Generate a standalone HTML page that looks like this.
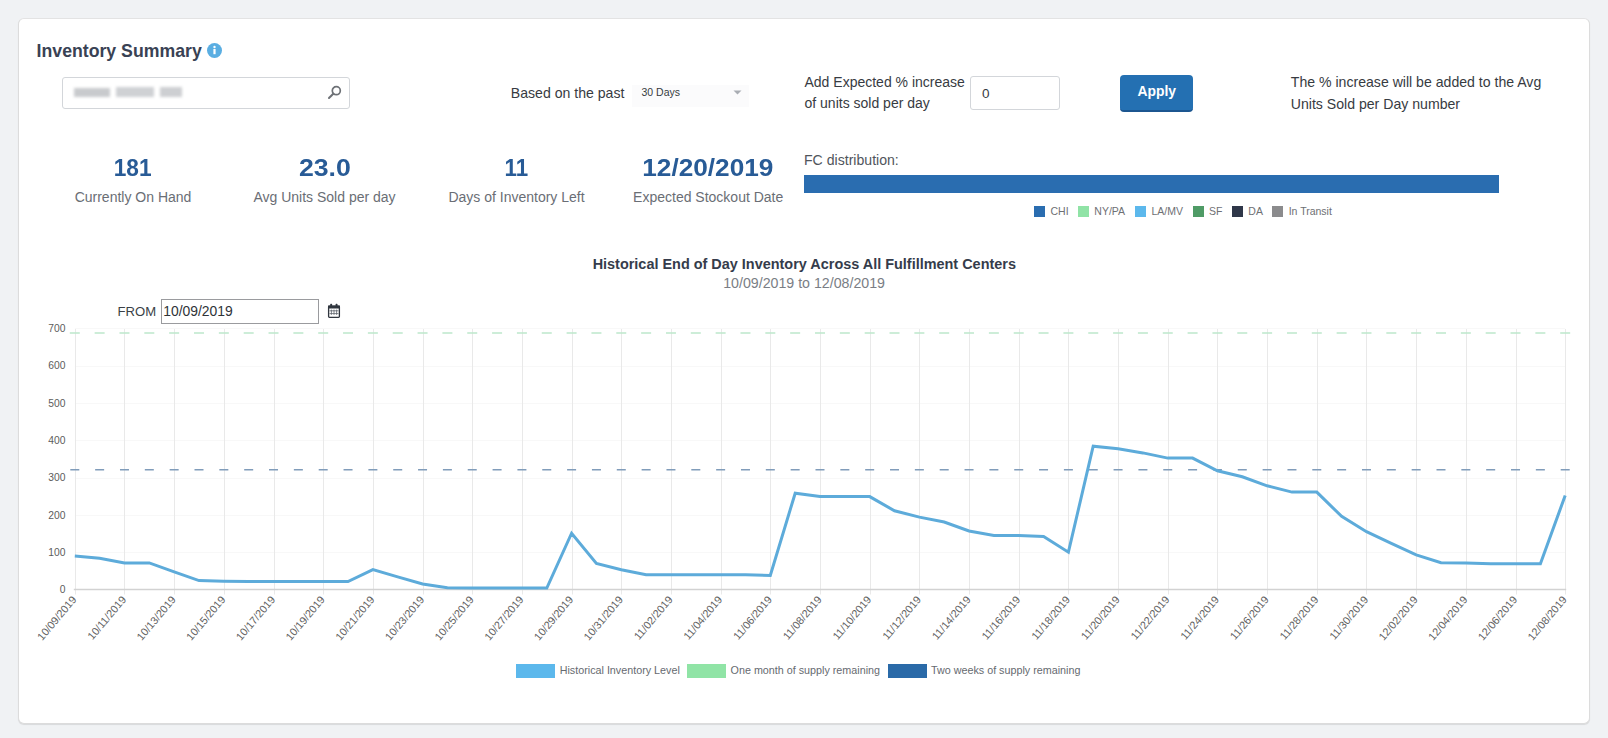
<!DOCTYPE html><html><head><meta charset="utf-8"><style>
html,body{margin:0;padding:0;}
body{width:1608px;height:738px;background:#f0f2f4;position:relative;overflow:hidden;font-family:"Liberation Sans",sans-serif;}
.t{position:absolute;line-height:1;white-space:nowrap;}
.b{position:absolute;box-sizing:border-box;}
</style></head><body>
<div class="b" style="left:18px;top:18px;width:1572px;height:706px;background:#fff;border:1px solid #dcdcdc;border-top-color:#e3e3e3;border-radius:6px;box-shadow:0 1px 1px rgba(0,0,0,0.10);"></div>
<div class="t" style="top:42.62px;font-size:17.7px;font-weight:700;color:#394254;left:36.60px;">Inventory Summary</div>
<svg class="b" style="left:206px;top:42px;" width="17" height="17" viewBox="0 0 17 17"><circle cx="8.5" cy="8.5" r="7.5" fill="#5aaee2"/><rect x="7.4" y="7" width="2.2" height="5.2" fill="#fff"/><circle cx="8.5" cy="5" r="1.2" fill="#fff"/></svg>
<div class="b" style="left:62px;top:77px;width:288px;height:32px;border:1px solid #d3d6da;border-radius:3px;background:#fff;"></div>
<div class="b" style="left:74px;top:88px;width:36px;height:8.5px;background:#c8cacd;filter:blur(1.8px);"></div>
<div class="b" style="left:115.5px;top:86.5px;width:38px;height:10px;background:#cfd1d4;filter:blur(1.8px);"></div>
<div class="b" style="left:160px;top:86.5px;width:22px;height:10px;background:#cdcfd2;filter:blur(1.8px);"></div>
<svg class="b" style="left:326px;top:85px;" width="16" height="16" viewBox="0 0 16 16"><circle cx="10.3" cy="5.7" r="4.0" fill="none" stroke="#6d7176" stroke-width="1.7"/><line x1="7.3" y1="8.7" x2="3" y2="13" stroke="#6d7176" stroke-width="2" stroke-linecap="round"/></svg>
<div class="t" style="top:85.96px;font-size:14.1px;font-weight:400;color:#373b42;left:510.80px;">Based on the past</div>
<div class="b" style="left:632px;top:85px;width:117px;height:22px;background:#fbfbfc;"></div>
<div class="t" style="top:87.21px;font-size:10.5px;font-weight:400;color:#373b42;left:641.50px;">30 Days</div>
<svg class="b" style="left:733px;top:90px;" width="9" height="5" viewBox="0 0 9 5"><path d="M0.5 0.5 L8.5 0.5 L4.5 4.5Z" fill="#a9adb3"/></svg>
<div class="t" style="top:75.45px;font-size:14.0px;font-weight:400;color:#373b42;left:804.50px;">Add Expected % increase</div>
<div class="t" style="top:95.85px;font-size:14.0px;font-weight:400;color:#373b42;left:804.50px;">of units sold per day</div>
<div class="b" style="left:970px;top:76px;width:90px;height:34px;border:1px solid #d3d6da;border-radius:3px;background:#fff;"></div>
<div class="t" style="top:86.67px;font-size:13.5px;font-weight:400;color:#373b42;left:982.00px;">0</div>
<div class="b" style="left:1120px;top:75px;width:73px;height:37px;background:#2470b2;border-radius:4px;border-bottom:2px solid #1c5690;"></div>
<div class="t" style="top:84.53px;font-size:13.9px;font-weight:700;color:#ffffff;left:556.80px;width:1200px;text-align:center;">Apply</div>
<div class="t" style="top:75.36px;font-size:14.1px;font-weight:400;color:#373b42;left:1290.80px;">The % increase will be added to the Avg</div>
<div class="t" style="top:96.66px;font-size:14.1px;font-weight:400;color:#373b42;left:1290.80px;">Units Sold per Day number</div>
<div class="t" style="top:156.71px;font-size:23.5px;font-weight:700;color:#285b96;left:-467.00px;width:1200px;text-align:center;"><span style="display:inline-block;transform:scaleX(0.965);transform-origin:50% 50%;">181</span></div>
<div class="t" style="top:190.25px;font-size:14.0px;font-weight:400;color:#6a6e75;left:-467.00px;width:1200px;text-align:center;">Currently On Hand</div>
<div class="t" style="top:156.71px;font-size:23.5px;font-weight:700;color:#285b96;left:-275.50px;width:1200px;text-align:center;"><span style="display:inline-block;transform:scaleX(1.135);transform-origin:50% 50%;">23.0</span></div>
<div class="t" style="top:190.25px;font-size:14.0px;font-weight:400;color:#6a6e75;left:-275.50px;width:1200px;text-align:center;">Avg Units Sold per day</div>
<div class="t" style="top:156.71px;font-size:23.5px;font-weight:700;color:#285b96;left:-83.50px;width:1200px;text-align:center;"><span style="display:inline-block;transform:scaleX(0.95);transform-origin:50% 50%;">11</span></div>
<div class="t" style="top:190.25px;font-size:14.0px;font-weight:400;color:#6a6e75;left:-83.50px;width:1200px;text-align:center;">Days of Inventory Left</div>
<div class="t" style="top:156.71px;font-size:23.5px;font-weight:700;color:#285b96;left:108.20px;width:1200px;text-align:center;"><span style="display:inline-block;transform:scaleX(1.115);transform-origin:50% 50%;">12/20/2019</span></div>
<div class="t" style="top:190.25px;font-size:14.0px;font-weight:400;color:#6a6e75;left:108.20px;width:1200px;text-align:center;">Expected Stockout Date</div>
<div class="t" style="top:153.06px;font-size:14.1px;font-weight:400;color:#50555c;left:804.00px;">FC distribution:</div>
<div class="b" style="left:804px;top:175px;width:695px;height:18px;background:#2a6db0;"></div>
<div class="b" style="left:1034px;top:206px;width:11px;height:10.5px;background:#2a6db0;"></div>
<div class="t" style="top:206.01px;font-size:10.5px;font-weight:400;color:#6e7074;left:1050.50px;">CHI</div>
<div class="b" style="left:1077.7px;top:206px;width:11px;height:10.5px;background:#90e3a6;"></div>
<div class="t" style="top:206.01px;font-size:10.5px;font-weight:400;color:#6e7074;left:1094.30px;">NY/PA</div>
<div class="b" style="left:1135px;top:206px;width:11px;height:10.5px;background:#5cb8ec;"></div>
<div class="t" style="top:206.01px;font-size:10.5px;font-weight:400;color:#6e7074;left:1151.40px;">LA/MV</div>
<div class="b" style="left:1192.8px;top:206px;width:11px;height:10.5px;background:#4f9b66;"></div>
<div class="t" style="top:206.01px;font-size:10.5px;font-weight:400;color:#6e7074;left:1209.00px;">SF</div>
<div class="b" style="left:1232px;top:206px;width:11px;height:10.5px;background:#2f3749;"></div>
<div class="t" style="top:206.01px;font-size:10.5px;font-weight:400;color:#6e7074;left:1248.30px;">DA</div>
<div class="b" style="left:1271.8px;top:206px;width:11px;height:10.5px;background:#8b8b8d;"></div>
<div class="t" style="top:206.01px;font-size:10.5px;font-weight:400;color:#6e7074;left:1288.70px;">In Transit</div>
<div class="t" style="top:256.57px;font-size:14.45px;font-weight:700;color:#353c4b;left:204.30px;width:1200px;text-align:center;">Historical End of Day Inventory Across All Fulfillment Centers</div>
<div class="t" style="top:276.48px;font-size:14.2px;font-weight:400;color:#7a7e85;left:204.10px;width:1200px;text-align:center;">10/09/2019 to 12/08/2019</div>
<div class="t" style="top:305.41px;font-size:13.1px;font-weight:400;color:#3a3f46;left:117.50px;">FROM</div>
<div class="b" style="left:161px;top:299px;width:158px;height:25px;border:1px solid #9a9b9e;background:#fff;"></div>
<div class="t" style="top:304.73px;font-size:13.9px;font-weight:400;color:#2f3338;left:163.20px;">10/09/2019</div>
<svg class="b" style="left:326px;top:302px;" width="16" height="18" viewBox="326 302 16 18">
<rect x="328.6" y="306.2" width="10.8" height="11.2" rx="0.8" fill="none" stroke="#30363f" stroke-width="1.3"/>
<rect x="328" y="305.6" width="12" height="2.9" fill="#30363f"/>
<rect x="330.2" y="303.8" width="1.9" height="2.5" rx="0.6" fill="#30363f"/><rect x="335.6" y="303.8" width="1.9" height="2.5" rx="0.6" fill="#30363f"/>
<g stroke="#5d636b" stroke-width="0.8" fill="none"><line x1="329.5" y1="310.8" x2="338.5" y2="310.8"/><line x1="329.5" y1="313.6" x2="338.5" y2="313.6"/>
<line x1="331.4" y1="309.6" x2="331.4" y2="314.8"/><line x1="334" y1="309.6" x2="334" y2="314.8"/><line x1="336.6" y1="309.6" x2="336.6" y2="314.8"/></g>
</svg>
<svg class="b" style="left:0;top:0;" width="1608" height="738" viewBox="0 0 1608 738">
<line x1="74.8" y1="552.5" x2="1565.2" y2="552.5" stroke="#f8f8f8" stroke-width="1"/>
<line x1="74.8" y1="515.5" x2="1565.2" y2="515.5" stroke="#f8f8f8" stroke-width="1"/>
<line x1="74.8" y1="478.5" x2="1565.2" y2="478.5" stroke="#f8f8f8" stroke-width="1"/>
<line x1="74.8" y1="440.5" x2="1565.2" y2="440.5" stroke="#f8f8f8" stroke-width="1"/>
<line x1="74.8" y1="403.5" x2="1565.2" y2="403.5" stroke="#f8f8f8" stroke-width="1"/>
<line x1="74.8" y1="366.5" x2="1565.2" y2="366.5" stroke="#f8f8f8" stroke-width="1"/>
<line x1="74.8" y1="328.5" x2="1565.2" y2="328.5" stroke="#f8f8f8" stroke-width="1"/>
<line x1="75.5" y1="329" x2="75.5" y2="594.5" stroke="#e9e9e9" stroke-width="1"/>
<line x1="124.5" y1="329" x2="124.5" y2="594.5" stroke="#e9e9e9" stroke-width="1"/>
<line x1="174.5" y1="329" x2="174.5" y2="594.5" stroke="#e9e9e9" stroke-width="1"/>
<line x1="224.5" y1="329" x2="224.5" y2="594.5" stroke="#e9e9e9" stroke-width="1"/>
<line x1="274.5" y1="329" x2="274.5" y2="594.5" stroke="#e9e9e9" stroke-width="1"/>
<line x1="323.5" y1="329" x2="323.5" y2="594.5" stroke="#e9e9e9" stroke-width="1"/>
<line x1="373.5" y1="329" x2="373.5" y2="594.5" stroke="#e9e9e9" stroke-width="1"/>
<line x1="423.5" y1="329" x2="423.5" y2="594.5" stroke="#e9e9e9" stroke-width="1"/>
<line x1="472.5" y1="329" x2="472.5" y2="594.5" stroke="#e9e9e9" stroke-width="1"/>
<line x1="522.5" y1="329" x2="522.5" y2="594.5" stroke="#e9e9e9" stroke-width="1"/>
<line x1="572.5" y1="329" x2="572.5" y2="594.5" stroke="#e9e9e9" stroke-width="1"/>
<line x1="621.5" y1="329" x2="621.5" y2="594.5" stroke="#e9e9e9" stroke-width="1"/>
<line x1="671.5" y1="329" x2="671.5" y2="594.5" stroke="#e9e9e9" stroke-width="1"/>
<line x1="721.5" y1="329" x2="721.5" y2="594.5" stroke="#e9e9e9" stroke-width="1"/>
<line x1="770.5" y1="329" x2="770.5" y2="594.5" stroke="#e9e9e9" stroke-width="1"/>
<line x1="820.5" y1="329" x2="820.5" y2="594.5" stroke="#e9e9e9" stroke-width="1"/>
<line x1="870.5" y1="329" x2="870.5" y2="594.5" stroke="#e9e9e9" stroke-width="1"/>
<line x1="919.5" y1="329" x2="919.5" y2="594.5" stroke="#e9e9e9" stroke-width="1"/>
<line x1="969.5" y1="329" x2="969.5" y2="594.5" stroke="#e9e9e9" stroke-width="1"/>
<line x1="1019.5" y1="329" x2="1019.5" y2="594.5" stroke="#e9e9e9" stroke-width="1"/>
<line x1="1068.5" y1="329" x2="1068.5" y2="594.5" stroke="#e9e9e9" stroke-width="1"/>
<line x1="1118.5" y1="329" x2="1118.5" y2="594.5" stroke="#e9e9e9" stroke-width="1"/>
<line x1="1168.5" y1="329" x2="1168.5" y2="594.5" stroke="#e9e9e9" stroke-width="1"/>
<line x1="1217.5" y1="329" x2="1217.5" y2="594.5" stroke="#e9e9e9" stroke-width="1"/>
<line x1="1267.5" y1="329" x2="1267.5" y2="594.5" stroke="#e9e9e9" stroke-width="1"/>
<line x1="1317.5" y1="329" x2="1317.5" y2="594.5" stroke="#e9e9e9" stroke-width="1"/>
<line x1="1366.5" y1="329" x2="1366.5" y2="594.5" stroke="#e9e9e9" stroke-width="1"/>
<line x1="1416.5" y1="329" x2="1416.5" y2="594.5" stroke="#e9e9e9" stroke-width="1"/>
<line x1="1466.5" y1="329" x2="1466.5" y2="594.5" stroke="#e9e9e9" stroke-width="1"/>
<line x1="1516.5" y1="329" x2="1516.5" y2="594.5" stroke="#e9e9e9" stroke-width="1"/>
<line x1="1565.5" y1="329" x2="1565.5" y2="594.5" stroke="#e9e9e9" stroke-width="1"/>
<line x1="73.8" y1="589.5" x2="1566.2" y2="589.5" stroke="#d2d2d2" stroke-width="1.6"/>
<text x="65.5" y="593.4" text-anchor="end" font-size="10.3" fill="#5c5c5c" font-family="Liberation Sans">0</text>
<text x="65.5" y="556.0" text-anchor="end" font-size="10.3" fill="#5c5c5c" font-family="Liberation Sans">100</text>
<text x="65.5" y="518.7" text-anchor="end" font-size="10.3" fill="#5c5c5c" font-family="Liberation Sans">200</text>
<text x="65.5" y="481.4" text-anchor="end" font-size="10.3" fill="#5c5c5c" font-family="Liberation Sans">300</text>
<text x="65.5" y="444.0" text-anchor="end" font-size="10.3" fill="#5c5c5c" font-family="Liberation Sans">400</text>
<text x="65.5" y="406.7" text-anchor="end" font-size="10.3" fill="#5c5c5c" font-family="Liberation Sans">500</text>
<text x="65.5" y="369.3" text-anchor="end" font-size="10.3" fill="#5c5c5c" font-family="Liberation Sans">600</text>
<text x="65.5" y="332.0" text-anchor="end" font-size="10.3" fill="#5c5c5c" font-family="Liberation Sans">700</text>
<line x1="69.80" y1="333" x2="1570.20" y2="333" stroke="#bde8cb" stroke-width="1.4" stroke-dasharray="10,14.840"/>
<line x1="70.30" y1="469.8" x2="1569.70" y2="469.8" stroke="#809cba" stroke-width="1.6" stroke-dasharray="9,15.840"/>
<polyline points="74.8,556.0 99.6,558.2 124.5,562.9 149.3,562.9 174.2,571.8 199.0,580.6 223.8,581.2 248.7,581.4 273.5,581.6 298.4,581.6 323.2,581.6 348.0,581.6 372.9,569.6 397.7,576.9 422.6,584.0 447.4,587.7 472.2,588.1 497.1,588.1 521.9,588.1 546.8,588.1 571.6,533.2 596.4,563.5 621.3,569.8 646.1,574.7 671.0,574.7 695.8,574.7 720.6,574.7 745.5,574.7 770.3,575.4 795.2,493.2 820.0,496.6 844.8,496.6 869.7,496.6 894.5,510.8 919.4,517.1 944.2,522.0 969.0,531.0 993.9,535.4 1018.7,535.4 1043.6,536.6 1068.4,552.2 1093.2,446.2 1118.1,448.8 1142.9,452.9 1167.8,458.1 1192.6,458.1 1217.4,470.8 1242.3,476.8 1267.1,485.8 1292.0,492.1 1316.8,492.1 1341.6,516.4 1366.5,531.7 1391.3,543.3 1416.2,554.9 1441.0,562.7 1465.8,563.1 1490.7,563.8 1515.5,563.8 1540.4,563.8 1565.2,495.5" fill="none" stroke="#5dabda" stroke-width="3" stroke-linejoin="miter"/>
<text x="0" y="0" transform="translate(71.3,595) rotate(-50)" text-anchor="end" font-size="10.8" fill="#5f5f5f" font-family="Liberation Sans" dy="7.5">10/09/2019</text>
<text x="0" y="0" transform="translate(121.0,595) rotate(-50)" text-anchor="end" font-size="10.8" fill="#5f5f5f" font-family="Liberation Sans" dy="7.5">10/11/2019</text>
<text x="0" y="0" transform="translate(170.7,595) rotate(-50)" text-anchor="end" font-size="10.8" fill="#5f5f5f" font-family="Liberation Sans" dy="7.5">10/13/2019</text>
<text x="0" y="0" transform="translate(220.3,595) rotate(-50)" text-anchor="end" font-size="10.8" fill="#5f5f5f" font-family="Liberation Sans" dy="7.5">10/15/2019</text>
<text x="0" y="0" transform="translate(270.0,595) rotate(-50)" text-anchor="end" font-size="10.8" fill="#5f5f5f" font-family="Liberation Sans" dy="7.5">10/17/2019</text>
<text x="0" y="0" transform="translate(319.7,595) rotate(-50)" text-anchor="end" font-size="10.8" fill="#5f5f5f" font-family="Liberation Sans" dy="7.5">10/19/2019</text>
<text x="0" y="0" transform="translate(369.4,595) rotate(-50)" text-anchor="end" font-size="10.8" fill="#5f5f5f" font-family="Liberation Sans" dy="7.5">10/21/2019</text>
<text x="0" y="0" transform="translate(419.1,595) rotate(-50)" text-anchor="end" font-size="10.8" fill="#5f5f5f" font-family="Liberation Sans" dy="7.5">10/23/2019</text>
<text x="0" y="0" transform="translate(468.7,595) rotate(-50)" text-anchor="end" font-size="10.8" fill="#5f5f5f" font-family="Liberation Sans" dy="7.5">10/25/2019</text>
<text x="0" y="0" transform="translate(518.4,595) rotate(-50)" text-anchor="end" font-size="10.8" fill="#5f5f5f" font-family="Liberation Sans" dy="7.5">10/27/2019</text>
<text x="0" y="0" transform="translate(568.1,595) rotate(-50)" text-anchor="end" font-size="10.8" fill="#5f5f5f" font-family="Liberation Sans" dy="7.5">10/29/2019</text>
<text x="0" y="0" transform="translate(617.8,595) rotate(-50)" text-anchor="end" font-size="10.8" fill="#5f5f5f" font-family="Liberation Sans" dy="7.5">10/31/2019</text>
<text x="0" y="0" transform="translate(667.5,595) rotate(-50)" text-anchor="end" font-size="10.8" fill="#5f5f5f" font-family="Liberation Sans" dy="7.5">11/02/2019</text>
<text x="0" y="0" transform="translate(717.1,595) rotate(-50)" text-anchor="end" font-size="10.8" fill="#5f5f5f" font-family="Liberation Sans" dy="7.5">11/04/2019</text>
<text x="0" y="0" transform="translate(766.8,595) rotate(-50)" text-anchor="end" font-size="10.8" fill="#5f5f5f" font-family="Liberation Sans" dy="7.5">11/06/2019</text>
<text x="0" y="0" transform="translate(816.5,595) rotate(-50)" text-anchor="end" font-size="10.8" fill="#5f5f5f" font-family="Liberation Sans" dy="7.5">11/08/2019</text>
<text x="0" y="0" transform="translate(866.2,595) rotate(-50)" text-anchor="end" font-size="10.8" fill="#5f5f5f" font-family="Liberation Sans" dy="7.5">11/10/2019</text>
<text x="0" y="0" transform="translate(915.9,595) rotate(-50)" text-anchor="end" font-size="10.8" fill="#5f5f5f" font-family="Liberation Sans" dy="7.5">11/12/2019</text>
<text x="0" y="0" transform="translate(965.5,595) rotate(-50)" text-anchor="end" font-size="10.8" fill="#5f5f5f" font-family="Liberation Sans" dy="7.5">11/14/2019</text>
<text x="0" y="0" transform="translate(1015.2,595) rotate(-50)" text-anchor="end" font-size="10.8" fill="#5f5f5f" font-family="Liberation Sans" dy="7.5">11/16/2019</text>
<text x="0" y="0" transform="translate(1064.9,595) rotate(-50)" text-anchor="end" font-size="10.8" fill="#5f5f5f" font-family="Liberation Sans" dy="7.5">11/18/2019</text>
<text x="0" y="0" transform="translate(1114.6,595) rotate(-50)" text-anchor="end" font-size="10.8" fill="#5f5f5f" font-family="Liberation Sans" dy="7.5">11/20/2019</text>
<text x="0" y="0" transform="translate(1164.3,595) rotate(-50)" text-anchor="end" font-size="10.8" fill="#5f5f5f" font-family="Liberation Sans" dy="7.5">11/22/2019</text>
<text x="0" y="0" transform="translate(1213.9,595) rotate(-50)" text-anchor="end" font-size="10.8" fill="#5f5f5f" font-family="Liberation Sans" dy="7.5">11/24/2019</text>
<text x="0" y="0" transform="translate(1263.6,595) rotate(-50)" text-anchor="end" font-size="10.8" fill="#5f5f5f" font-family="Liberation Sans" dy="7.5">11/26/2019</text>
<text x="0" y="0" transform="translate(1313.3,595) rotate(-50)" text-anchor="end" font-size="10.8" fill="#5f5f5f" font-family="Liberation Sans" dy="7.5">11/28/2019</text>
<text x="0" y="0" transform="translate(1363.0,595) rotate(-50)" text-anchor="end" font-size="10.8" fill="#5f5f5f" font-family="Liberation Sans" dy="7.5">11/30/2019</text>
<text x="0" y="0" transform="translate(1412.7,595) rotate(-50)" text-anchor="end" font-size="10.8" fill="#5f5f5f" font-family="Liberation Sans" dy="7.5">12/02/2019</text>
<text x="0" y="0" transform="translate(1462.3,595) rotate(-50)" text-anchor="end" font-size="10.8" fill="#5f5f5f" font-family="Liberation Sans" dy="7.5">12/04/2019</text>
<text x="0" y="0" transform="translate(1512.0,595) rotate(-50)" text-anchor="end" font-size="10.8" fill="#5f5f5f" font-family="Liberation Sans" dy="7.5">12/06/2019</text>
<text x="0" y="0" transform="translate(1561.7,595) rotate(-50)" text-anchor="end" font-size="10.8" fill="#5f5f5f" font-family="Liberation Sans" dy="7.5">12/08/2019</text>
</svg>
<div class="b" style="left:516px;top:663.5px;width:39px;height:14px;background:#5cb8ec;"></div>
<div class="t" style="top:665.20px;font-size:10.75px;font-weight:400;color:#666a70;left:559.70px;">Historical Inventory Level</div>
<div class="b" style="left:687.3px;top:663.5px;width:39px;height:14px;background:#90e4a6;"></div>
<div class="t" style="top:665.20px;font-size:10.75px;font-weight:400;color:#666a70;left:730.60px;">One month of supply remaining</div>
<div class="b" style="left:888px;top:663.5px;width:39px;height:14px;background:#2a6aa8;"></div>
<div class="t" style="top:665.20px;font-size:10.75px;font-weight:400;color:#666a70;left:931.00px;">Two weeks of supply remaining</div>
</body></html>
